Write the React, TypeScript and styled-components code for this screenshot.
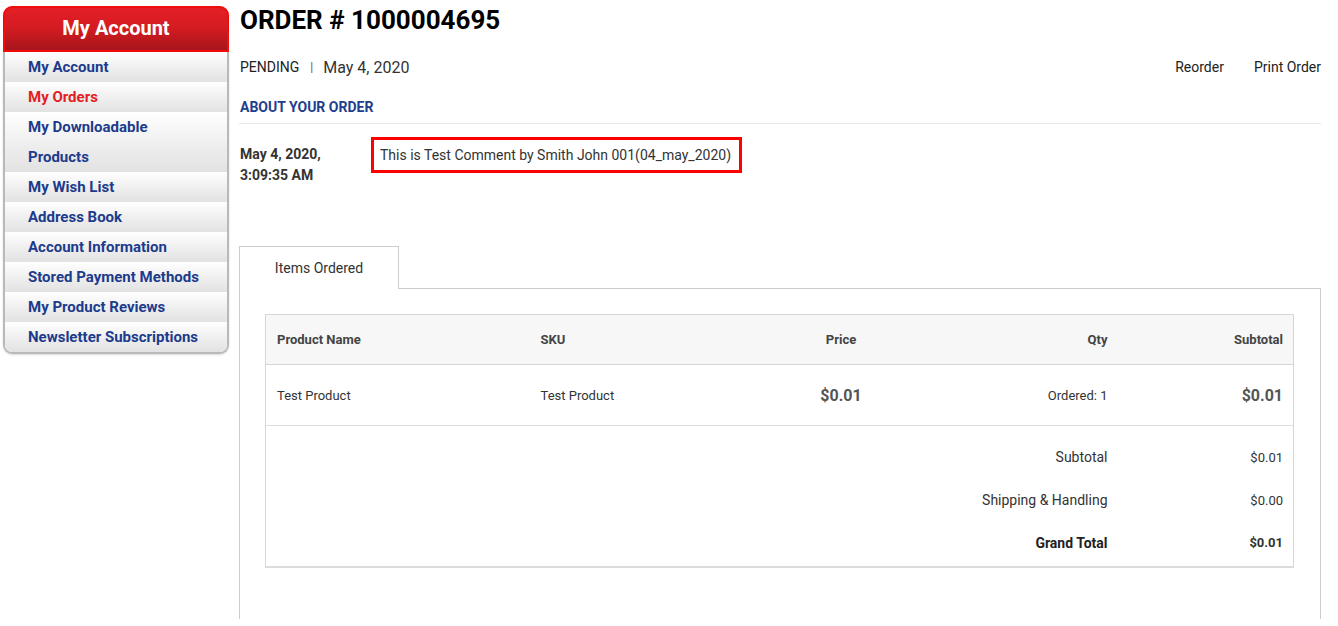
import React from "react";
import styled, { createGlobalStyle } from "styled-components";

const GlobalStyle = createGlobalStyle`
  html, body { margin: 0; padding: 0; background: #fff; }
  body { font-family: Roboto, "Liberation Sans", Arial, sans-serif; color: #333; }
  * { box-sizing: border-box; }
`;

const Page = styled.div`
  display: flex;
  align-items: flex-start;
  gap: 10px;
  padding: 6px 17px 0 3px;
  width: 1338px;
  height: 626px;
  overflow: hidden;
`;

const Sidebar = styled.aside`
  width: 226px;
  flex: none;
`;

const SideHeader = styled.div`
  height: 46px;
  border: 2px solid #f20d0d;
  border-radius: 9px 9px 0 0;
  background: linear-gradient(#e41f25 0%, #d51c22 45%, #a8151b 100%);
  color: #fff;
  font-weight: 700;
  font-size: 20px;
  display: flex;
  align-items: center;
  justify-content: center;
  padding-bottom: 2px;
`;

const SideMenu = styled.ul`
  list-style: none;
  margin: 0;
  padding: 0;
  border: 2px solid #b9b9b9;
  border-top: none;
  border-radius: 0 0 9px 9px;
  overflow: hidden;
  box-shadow: 0 1px 2px rgba(0, 0, 0, 0.15);
`;

const SideItem = styled.li<{ $active?: boolean }>`
  padding: 0 26px 0 23px;
  line-height: 30px;
  font-size: 15px;
  font-weight: 700;
  color: ${(p) => (p.$active ? "#e31e24" : "#1c3b8c")};
  background: linear-gradient(#ffffff 0%, #f1f1f1 45%, #e2e2e2 100%);
`;

const Main = styled.main`
  flex: 1;
  min-width: 0;
  display: flex;
  flex-direction: column;
  height: 613px;
`;

const Title = styled.h1`
  margin: 0;
  font-size: 26px;
  line-height: 28px;
  font-weight: 700;
  color: #000;
  padding-left: 1px;
`;

const StatusRow = styled.div`
  display: flex;
  align-items: center;
  margin-top: 23px;
  height: 20px;
  padding-left: 1px;
`;

const Status = styled.span`
  font-size: 14px;
  text-transform: uppercase;
  color: #222;
`;

const Sep = styled.span`
  font-size: 12px;
  color: #6b5a3a;
  margin: 0 10px 0 11px;
`;

const OrderDate = styled.span`
  font-size: 16px;
  color: #333;
`;

const Actions = styled.div`
  margin-left: auto;
  display: flex;
  gap: 30px;
`;

const ActionLink = styled.span`
  font-size: 14px;
  color: #222;
`;

const SectionTitle = styled.h2`
  margin: 20px 0 0;
  font-size: 14px;
  line-height: 20px;
  font-weight: 700;
  color: #1f3e8e;
  padding: 0 0 6px 1px;
  border-bottom: 1px solid #e8e8e8;
`;

const CommentRow = styled.div`
  display: flex;
  align-items: flex-start;
  margin-top: 13px;
`;

const CommentDate = styled.div`
  width: 132px;
  flex: none;
  font-size: 14px;
  font-weight: 700;
  line-height: 21px;
  padding: 7px 0 0 1px;
  color: #333;
`;

const CommentBox = styled.div`
  border: 3px solid #f00;
  padding: 0 8px 0 6px;
  height: 36px;
  display: flex;
  align-items: center;
  font-size: 14px;
  color: #333;
`;

const Tabs = styled.div`
  margin-top: 60px;
  display: flex;
`;

const Tab = styled.div`
  width: 160px;
  height: 43px;
  border: 1px solid #ccc;
  border-bottom: none;
  background: #fff;
  display: flex;
  align-items: center;
  justify-content: center;
  font-size: 14px;
  color: #333;
  position: relative;
  margin-bottom: -1px;
  z-index: 1;
`;

const Panel = styled.div`
  flex: 1;
  border: 1px solid #ccc;
  border-bottom: none;
  padding: 25px 26px 0 25px;
`;

const Table = styled.table`
  width: 100%;
  border-collapse: collapse;
  table-layout: fixed;
  border: 1px solid #d6d6d6;
  border-bottom: 2px solid #dcdcdc;
  font-size: 13px;
  color: #333;
`;

const HeadRow = styled.tr`
  background: #f7f7f7;
  border-bottom: 1px solid #d6d6d6;
`;

const Th = styled.th<{ $align?: string; $pr?: number }>`
  height: 50px;
  padding: 0 ${(p) => p.$pr ?? 11}px 0 11px;
  text-align: ${(p) => p.$align ?? "left"};
  font-weight: 700;
  font-size: 13px;
  color: #444;
`;

const ItemRow = styled.tr`
  border-bottom: 1px solid #dcdcdc;
`;

const Td = styled.td<{ $align?: string; $pr?: number }>`
  height: 61px;
  padding: 0 ${(p) => p.$pr ?? 11}px 0 11px;
  text-align: ${(p) => p.$align ?? "left"};
  vertical-align: middle;
`;

const Money = styled.span`
  font-size: 16px;
  font-weight: 700;
  color: #555;
`;

const QtyText = styled.span`
  font-size: 13px;
  color: #333;
`;

const TotalRow = styled.tr<{ $first?: boolean; $last?: boolean }>`
  td {
    height: ${(p) => (p.$first ? 53 : p.$last ? 45 : 43)}px;
    padding-top: ${(p) => (p.$first ? 10 : 0)}px;
    padding-bottom: ${(p) => (p.$last ? 2 : 0)}px;
  }
`;

const TotalLabel = styled.td<{ $bold?: boolean }>`
  text-align: right;
  padding-right: 11px;
  font-size: 14px;
  font-weight: ${(p) => (p.$bold ? 700 : 400)};
  color: ${(p) => (p.$bold ? "#222" : "#333")};
  vertical-align: middle;
`;

const TotalValue = styled.td<{ $bold?: boolean }>`
  text-align: right;
  padding-right: 10px;
  font-size: 13px;
  font-weight: ${(p) => (p.$bold ? 700 : 400)};
  color: #333;
  vertical-align: middle;
`;

const menu = [
  { label: "My Account" },
  { label: "My Orders", active: true },
  { label: "My Downloadable Products" },
  { label: "My Wish List" },
  { label: "Address Book" },
  { label: "Account Information" },
  { label: "Stored Payment Methods" },
  { label: "My Product Reviews" },
  { label: "Newsletter Subscriptions" },
];

const totals = [
  { label: "Subtotal", value: "$0.01" },
  { label: "Shipping & Handling", value: "$0.00" },
  { label: "Grand Total", value: "$0.01", bold: true },
];

export default function App() {
  return (
    <>
      <GlobalStyle />
      <Page>
        <Sidebar>
          <SideHeader>My Account</SideHeader>
          <SideMenu>
            {menu.map((m) => (
              <SideItem key={m.label} $active={m.active}>
                {m.label}
              </SideItem>
            ))}
          </SideMenu>
        </Sidebar>
        <Main>
          <Title>ORDER # 1000004695</Title>
          <StatusRow>
            <Status>Pending</Status>
            <Sep>|</Sep>
            <OrderDate>May 4, 2020</OrderDate>
            <Actions>
              <ActionLink>Reorder</ActionLink>
              <ActionLink>Print Order</ActionLink>
            </Actions>
          </StatusRow>
          <SectionTitle>ABOUT YOUR ORDER</SectionTitle>
          <CommentRow>
            <CommentDate>
              May 4, 2020,
              <br />
              3:09:35 AM
            </CommentDate>
            <CommentBox>This is Test Comment by Smith John 001(04_may_2020)</CommentBox>
          </CommentRow>
          <Tabs>
            <Tab>Items Ordered</Tab>
          </Tabs>
          <Panel>
            <Table>
              <colgroup>
                <col style={{ width: 264 }} />
                <col style={{ width: 229 }} />
                <col style={{ width: 165 }} />
                <col style={{ width: 195 }} />
                <col />
              </colgroup>
              <thead>
                <HeadRow>
                  <Th>Product Name</Th>
                  <Th>SKU</Th>
                  <Th $align="center">Price</Th>
                  <Th $align="right">Qty</Th>
                  <Th $align="right" $pr={10}>
                    Subtotal
                  </Th>
                </HeadRow>
              </thead>
              <tbody>
                <ItemRow>
                  <Td>Test Product</Td>
                  <Td>Test Product</Td>
                  <Td $align="center">
                    <Money>$0.01</Money>
                  </Td>
                  <Td $align="right">
                    <QtyText>Ordered: 1</QtyText>
                  </Td>
                  <Td $align="right" $pr={10}>
                    <Money>$0.01</Money>
                  </Td>
                </ItemRow>
              </tbody>
              <tfoot>
                {totals.map((t, i) => (
                  <TotalRow key={t.label} $first={i === 0} $last={i === totals.length - 1}>
                    <TotalLabel colSpan={4} $bold={t.bold}>
                      {t.label}
                    </TotalLabel>
                    <TotalValue $bold={t.bold}>{t.value}</TotalValue>
                  </TotalRow>
                ))}
              </tfoot>
            </Table>
          </Panel>
        </Main>
      </Page>
    </>
  );
}
